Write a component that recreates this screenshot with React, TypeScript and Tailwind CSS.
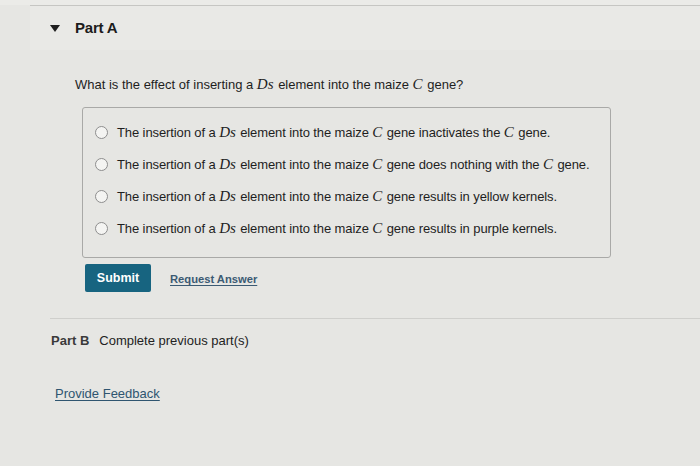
import React from "react";

const M = ({ children }: { children: React.ReactNode }) => (
  <span className="italic text-[15px] pr-[1px]" style={{ fontFamily: '"Liberation Serif", "DejaVu Serif", serif' }}>
    {children}
  </span>
);

const Option = ({ children }: { children: React.ReactNode }) => (
  <div className="flex items-center h-[32px]">
    <span className="w-[13px] h-[13px] rounded-full border border-[#8e8e8e] bg-[#f4f4f2] mr-[9px] shrink-0" />
    <span className="text-[13px] text-[#1e1e1e] tracking-[-0.1px]">{children}</span>
  </div>
);

export default function App() {
  return (
    <div
      className="w-[700px] h-[466px] bg-[#e6e6e3] overflow-hidden"
      style={{ fontFamily: '"Liberation Sans", Arial, sans-serif' }}
    >
      <div className="h-[5px] bg-[#ebebe8]" />
      <div className="ml-[30px] border-t border-[#c6c6c3]" />
      <div className="ml-[30px] h-[44px] bg-[#e9e9e6] flex items-center pl-[20px]">
        <svg width="10" height="7" viewBox="0 0 10 7" className="mr-[15px]">
          <polygon points="0,0 10,0 5,7" fill="#1e1e1e" />
        </svg>
        <span className="text-[15px] font-bold text-[#1c1c1c] tracking-[-0.2px]">Part A</span>
      </div>
      <div className="pl-[75px] pt-[24px] text-[13px] text-[#1e1e1e] leading-[20px]">
        What is the effect of inserting a <M>Ds</M> element into the maize <M>C</M> gene?
      </div>
      <div className="ml-[82px] mt-[12px] w-[529px] h-[151px] border border-[#a9a9a7] rounded-[3px] pl-[12px] pt-[8px]">
        <Option>
          The insertion of a <M>Ds</M> element into the maize <M>C</M> gene inactivates the <M>C</M> gene.
        </Option>
        <Option>
          The insertion of a <M>Ds</M> element into the maize <M>C</M> gene does nothing with the <M>C</M> gene.
        </Option>
        <Option>
          The insertion of a <M>Ds</M> element into the maize <M>C</M> gene results in yellow kernels.
        </Option>
        <Option>
          The insertion of a <M>Ds</M> element into the maize <M>C</M> gene results in purple kernels.
        </Option>
      </div>
      <div className="ml-[85px] mt-[6px] flex items-center">
        <button className="w-[66px] h-[28px] bg-[#176480] text-white text-[12.5px] font-bold rounded-[2px]">
          Submit
        </button>
        <span className="ml-[19px] mt-[3px] text-[11.2px] font-bold text-[#3b5a73] underline underline-offset-2">
          Request Answer
        </span>
      </div>
      <div className="ml-[50px] mt-[26px] border-t border-[#cfcfcc]" />
      <div className="ml-[51px] mt-[13px] flex items-center text-[13px] leading-[18px]">
        <span className="font-bold text-[#3a3a3a]">Part B</span>
        <span className="ml-[10px] text-[#222]">Complete previous part(s)</span>
      </div>
      <div className="ml-[55px] mt-[34px] text-[13px] text-[#2f5570] underline underline-offset-2">
        Provide Feedback
      </div>
    </div>
  );
}
